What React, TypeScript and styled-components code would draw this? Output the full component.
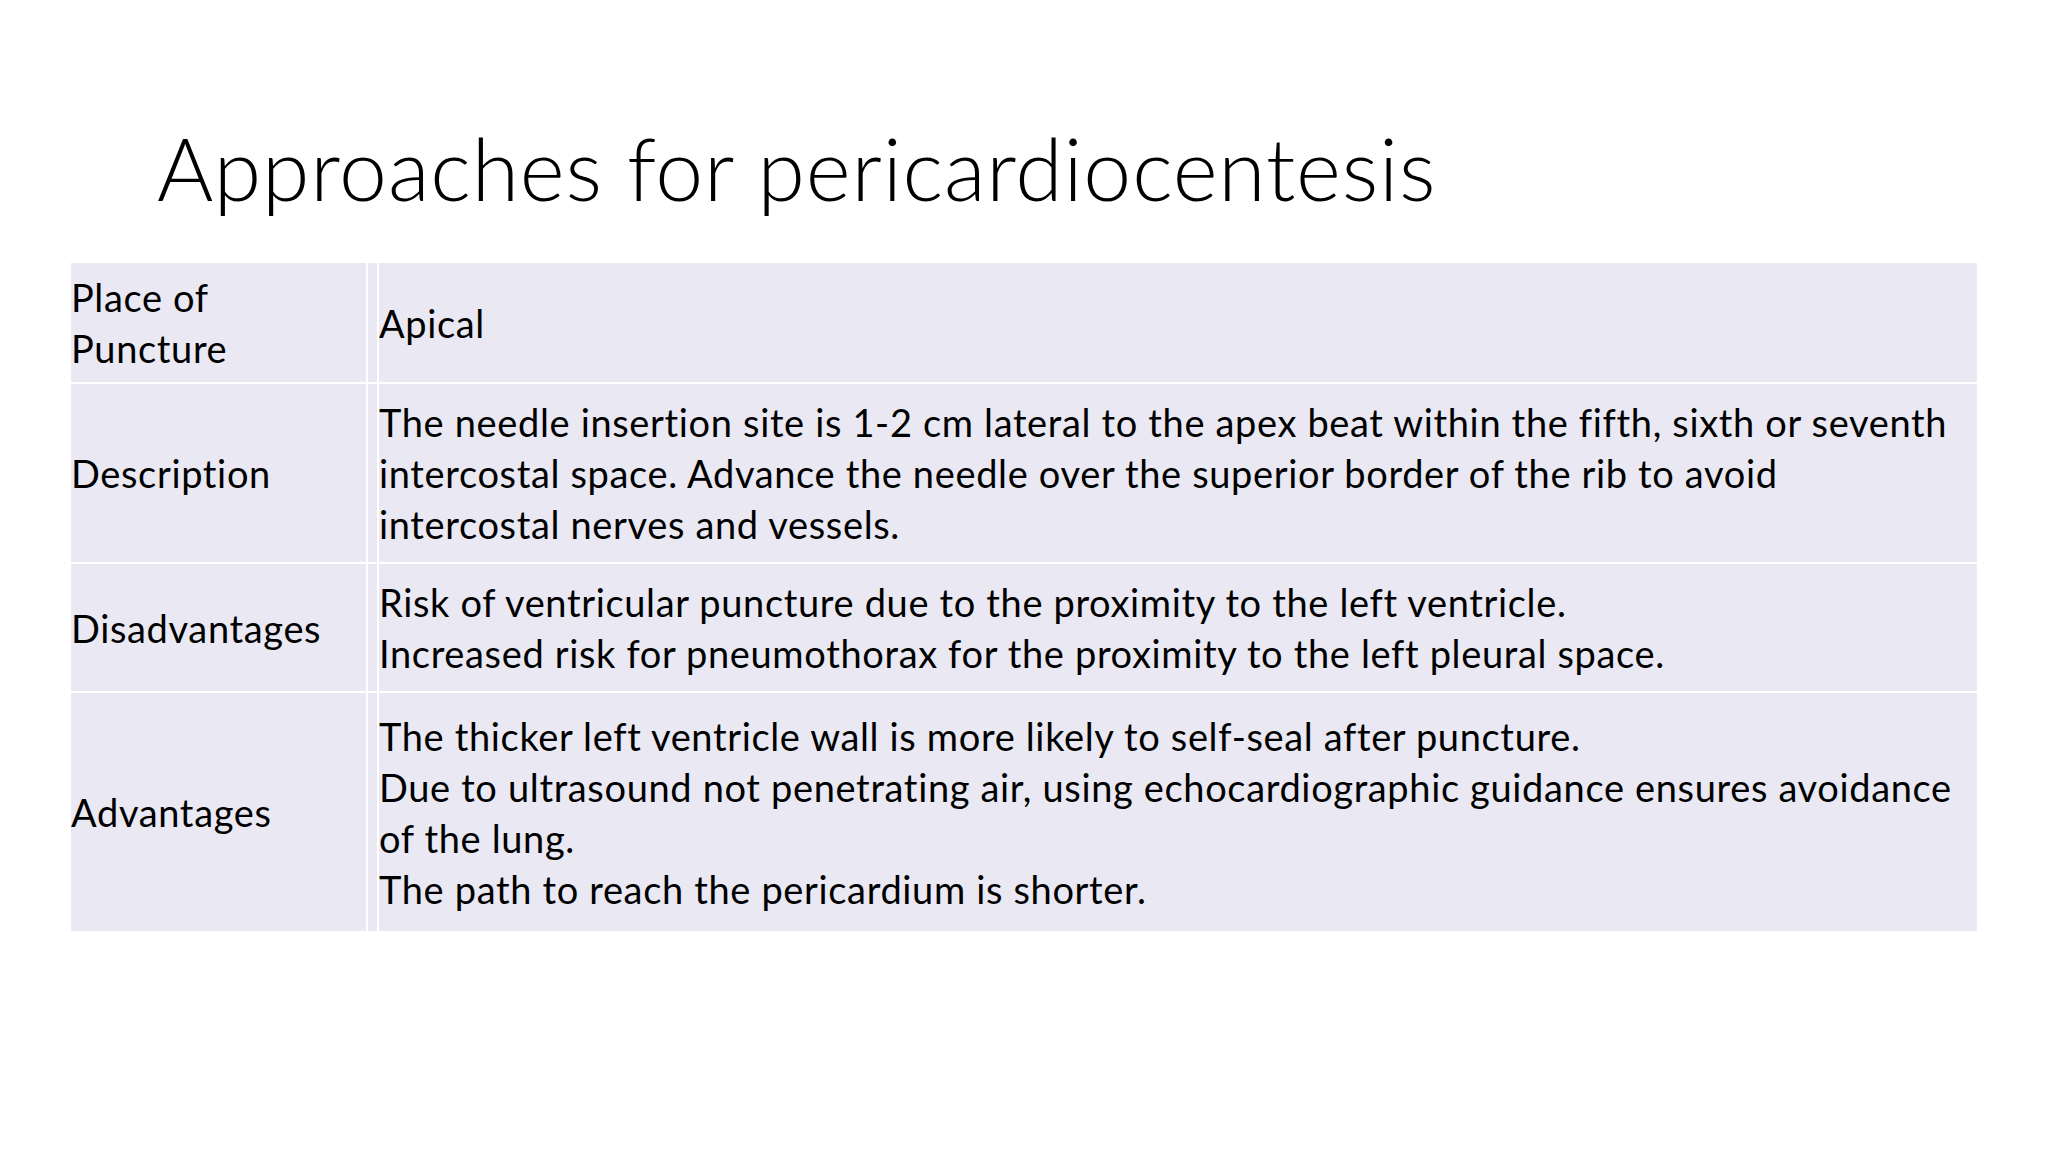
import React from 'react';
import styled, { createGlobalStyle } from 'styled-components';

const GlobalStyle = createGlobalStyle`
  html, body {
    margin: 0;
    padding: 0;
    background: #ffffff;
  }
  body {
    font-family: Lato, "Noto Sans", sans-serif;
    color: #000000;
    font-variant-ligatures: none;
  }
`;

const Slide = styled.div`
  width: 2048px;
  height: 1152px;
  box-sizing: border-box;
  padding: 119px 71px 0 71px;
  background: #ffffff;
  overflow: hidden;
`;

const Title = styled.h1`
  margin: 0 0 46px 86px;
  font-family: Lato, "Noto Sans", sans-serif;
  font-weight: 300;
  font-size: 86px;
  letter-spacing: 0.8px;
  line-height: 98px;
  color: #000000;
  white-space: nowrap;
`;

const Table = styled.div`
  display: flex;
  flex-direction: column;
  gap: 2px;
  width: 1906px;
  background: #ffffff;
`;

const Row = styled.div<{ $height: number }>`
  display: grid;
  grid-template-columns: 295px 9px 1fr;
  column-gap: 2px;
  height: ${(p) => p.$height}px;
`;

const Cell = styled.div`
  display: flex;
  flex-direction: column;
  justify-content: center;
  background: #e9e8f3;
  padding: 1px 0 0 0;
  font-size: 38px;
  letter-spacing: 0.65px;
  line-height: 51px;
  color: #000000;
`;

const Spacer = styled.div`
  background: #e9e8f3;
`;

const Line = styled.span`
  display: block;
  white-space: nowrap;
`;

const rows: { label: string[]; text: string[]; height: number }[] = [
  { label: ['Place of', 'Puncture'], text: ['Apical'], height: 119 },
  {
    label: ['Description'],
    text: [
      'The needle insertion site is 1-2 cm lateral to the apex beat within the fifth, sixth or seventh',
      'intercostal space. Advance the needle over the superior border of the rib to avoid',
      'intercostal nerves and vessels.',
    ],
    height: 178,
  },
  {
    label: ['Disadvantages'],
    text: [
      'Risk of ventricular puncture due to the proximity to the left ventricle.',
      'Increased risk for pneumothorax for the proximity to the left pleural space.',
    ],
    height: 127,
  },
  {
    label: ['Advantages'],
    text: [
      'The thicker left ventricle wall is more likely to self-seal after puncture.',
      'Due to ultrasound not penetrating air, using echocardiographic guidance ensures avoidance',
      'of the lung.',
      'The path to reach the pericardium is shorter.',
    ],
    height: 238,
  },
];

export default function App() {
  return (
    <>
      <GlobalStyle />
      <Slide>
        <Title>Approaches for pericardiocentesis</Title>
        <Table>
          {rows.map((row) => (
            <Row key={row.label.join(' ')} $height={row.height}>
              <Cell>
                {row.label.map((l) => (
                  <Line key={l}>{l}</Line>
                ))}
              </Cell>
              <Spacer />
              <Cell>
                {row.text.map((t) => (
                  <Line key={t}>{t}</Line>
                ))}
              </Cell>
            </Row>
          ))}
        </Table>
      </Slide>
    </>
  );
}
